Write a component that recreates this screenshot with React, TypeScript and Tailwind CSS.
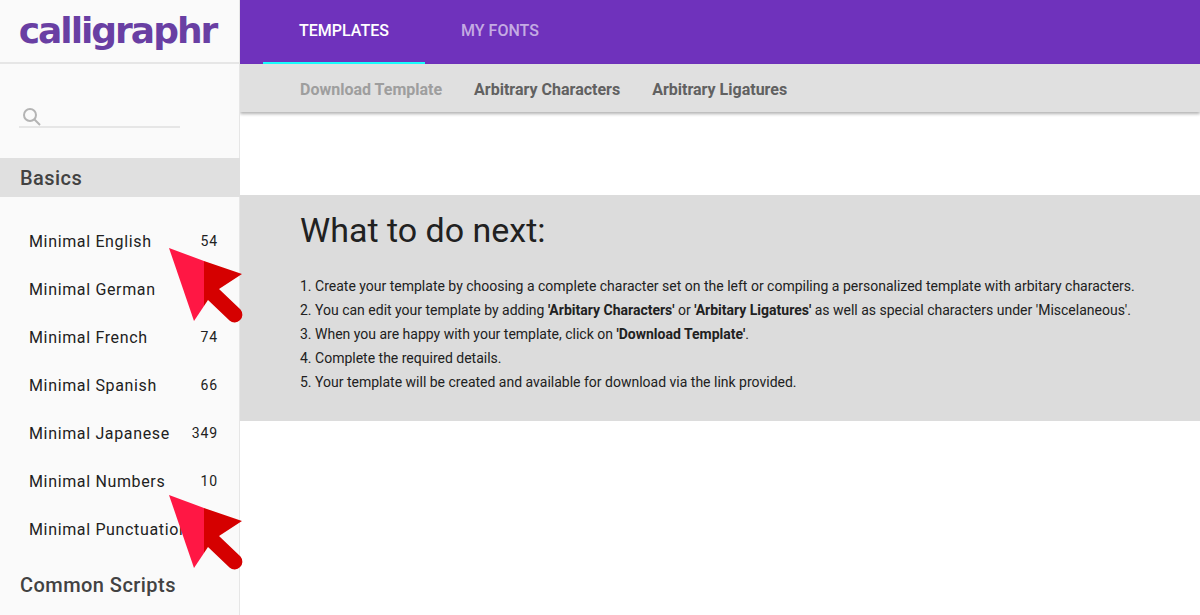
const items = [
  { name: 'Minimal English', count: '54' },
  { name: 'Minimal German', count: '' },
  { name: 'Minimal French', count: '74' },
  { name: 'Minimal Spanish', count: '66' },
  { name: 'Minimal Japanese', count: '349' },
  { name: 'Minimal Numbers', count: '10' },
  { name: 'Minimal Punctuation', count: '' },
];

function Arrow({ className }: { className: string }) {
  return (
    <svg className={className} width="80" height="80" viewBox="0 0 80 80">
      <path d="M0 0 L35 13 L35 58 L25 73 Z" fill="#ff1744" />
      <path d="M35 13 L73 26 L50 41 L71.5 61.5 A7.8 7.8 0 0 1 60.5 72.5 L39 52 L35 58 Z" fill="#d50000" />
    </svg>
  );
}

function SearchIcon() {
  return (
    <svg width="20" height="20" viewBox="0 0 20 20" fill="none" stroke="#b4b4b4" strokeWidth="2">
      <circle cx="8" cy="8" r="6" />
      <path d="M12 12 L18 18" />
    </svg>
  );
}

export default function App() {
  return (
    <div className="relative flex h-[615px] w-[1200px] overflow-hidden bg-white font-['Roboto',sans-serif]">
      {/* Sidebar */}
      <aside className="relative z-10 flex w-[240px] shrink-0 flex-col border-r border-[#e6e6e6] bg-[#fafafa]">
        <div className="flex h-[64px] shrink-0 items-center justify-center border-b-2 border-[#e6e6e6]">
          <span className="mr-[4px] font-['DejaVu_Sans',sans-serif] text-[36px] leading-none font-bold tracking-[-2px] text-[#693fa3]">
            calligraphr
          </span>
        </div>
        <div className="mt-[43px] ml-[19px] flex h-[21px] w-[161px] items-start border-b-2 border-[#e6e6e6] pl-[3px]">
          <SearchIcon />
        </div>
        <div className="mt-[30px] mr-[-1px] flex h-[39px] items-center bg-[#e0e0e0] pl-[20px] text-[20px] font-medium tracking-[0.45px] text-[#424242]">
          Basics
        </div>
        <ul className="mt-[21px] flex flex-col">
          {items.map((item) => (
            <li key={item.name} className="flex h-[48px] items-center justify-between pr-[21px] pl-[29px] text-[16px] tracking-[0.65px] text-[#212121]">
              <span className="whitespace-nowrap">{item.name}</span>
              <span className="mb-[2px] text-[14px] tracking-[0.9px]">{item.count}</span>
            </li>
          ))}
        </ul>
        <div className="mt-[16px] pl-[20px] text-[20px] font-medium tracking-[0.45px] text-[#424242]">Common Scripts</div>
      </aside>

      {/* Main */}
      <main className="flex min-w-0 flex-1 flex-col">
        <nav className="flex h-[64px] shrink-0 bg-[#6f32bc] pl-[23px] text-[16px]">
          <div className="flex h-full w-[162px] items-center justify-center border-b-2 border-[#18ffff] font-medium text-white">TEMPLATES</div>
          <div className="flex h-full w-[150px] items-center justify-center border-b-2 border-transparent font-medium text-white/60">MY FONTS</div>
        </nav>
        <div className="flex h-[48px] shrink-0 items-center gap-[32px] bg-[#e0e0e0] pt-[4px] pl-[60px] text-[16px] font-bold text-[#616161] shadow-[0_2px_3px_rgba(0,0,0,0.3)]">
          <span className="text-[#9e9e9e]">Download Template</span>
          <span>Arbitrary Characters</span>
          <span>Arbitrary Ligatures</span>
        </div>
        <section className="mt-[83px] h-[226px] bg-[#dcdcdc] pt-[13px] pl-[60px] text-[#212121]">
          <h1 className="text-[34px] leading-[44px] font-normal">What to do next:</h1>
          <ol className="mt-[22px] text-[14px] leading-[24px]">
            <li>1. Create your template by choosing a complete character set on the left or compiling a personalized template with arbitary characters.</li>
            <li>2. You can edit your template by adding <b>'Arbitary Characters'</b> or <b>'Arbitary Ligatures'</b> as well as special characters under 'Miscelaneous'.</li>
            <li>3. When you are happy with your template, click on <b>'Download Template'</b>.</li>
            <li>4. Complete the required details.</li>
            <li>5. Your template will be created and available for download via the link provided.</li>
          </ol>
        </section>
      </main>

      {/* Annotation arrows */}
      <Arrow className="absolute top-[248px] left-[169px] z-20" />
      <Arrow className="absolute top-[495px] left-[169px] z-20" />
    </div>
  );
}
